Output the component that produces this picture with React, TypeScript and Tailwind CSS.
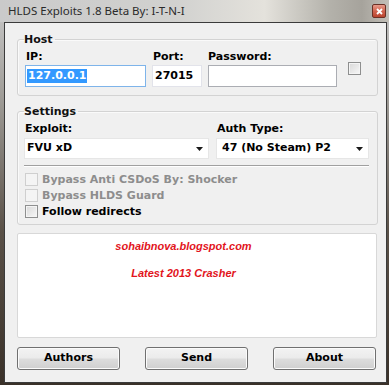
import React from 'react';

const ui = { fontFamily: '"DejaVu Sans", Verdana, sans-serif' };

const Arrow: React.FC = () => (
  <svg width="7" height="4" viewBox="0 0 7 4" className="shrink-0">
    <path d="M0 0h7L3.5 4z" fill="#1a1a1a" />
  </svg>
);

const Check: React.FC<{ disabled?: boolean }> = ({ disabled }) => (
  <span
    className={`inline-block w-[13px] h-[13px] shrink-0 border ${
      disabled
        ? 'border-[#cfcfcf] bg-[#f4f4f4]'
        : 'border-[#8e8f8f] bg-[linear-gradient(135deg,#d8d8d8,#f7f7f7)] shadow-[inset_0_0_0_1px_#f4f4f4]'
    }`}
  />
);

const Btn: React.FC<{ label: string }> = ({ label }) => (
  <button className="w-[103px] h-[23px] rounded-[3px] border border-[#707070] bg-[linear-gradient(180deg,#f3f3f3_0%,#ebebeb_48%,#dddddd_52%,#cfcfcf_100%)] shadow-[inset_0_0_0_1px_#fbfbfb] text-[11px] font-bold text-black">
    {label}
  </button>
);

export default function App() {
  return (
    <div
      className="w-[389px] h-[385px] flex flex-col overflow-hidden bg-[linear-gradient(180deg,#c9c9c9_0%,#a09d98_25%,#5a5148_60%,#3a3129_100%)]"
      style={ui}
    >
      {/* title bar */}
      <div className="h-[22px] shrink-0 flex items-center justify-between pl-[8px] pr-[3px] bg-[linear-gradient(90deg,#cacaca_0%,#d1d1cf_45%,#e4e2dc_68%,#b3b1aa_85%,#a6a39c_93%,#c2bfb8_100%)]">
        <span className="text-[11.5px] text-[#2a2a2a] leading-none" style={{ fontFamily: '"Noto Sans", "Liberation Sans", sans-serif' }}>
          HLDS Exploits 1.8 Beta By: I-T-N-I
        </span>
        <div className="w-[14px] h-[14px] rounded-[2px] border border-[#6b3025] bg-[linear-gradient(180deg,#e69a8a_0%,#d2644f_50%,#b9442f_100%)] flex items-center justify-center">
          <svg width="7" height="7" viewBox="0 0 7 7">
            <path d="M1 1l5 5M6 1L1 6" stroke="#fff" strokeWidth="1.8" />
          </svg>
        </div>
      </div>

      {/* client */}
      <div className="flex-1 ml-[4px] mr-[2px] mb-[2px] border border-[#3b3b3b] bg-[#f0f0f0] pl-[12px] pt-[10px] flex flex-col">
        {/* Host */}
        <fieldset className="w-[361px] border border-[#d3d3d3] rounded-[3px] px-[7px] pb-[8px] shadow-[inset_1px_1px_0_#fafafa]">
          <legend className="text-[11px] font-bold leading-[13px] text-[#111] -ml-[1px] pr-[2px]">Host</legend>
          <div className="flex items-end mt-[4px]">
            <div className="flex flex-col w-[121px]">
              <span className="text-[11px] font-bold leading-[13px] pl-[1px] mb-[2px]">IP:</span>
              <div className="h-[22px] border border-[#7eb4ea] bg-white flex items-center pl-[1px]">
                <span className="text-[11px] font-bold leading-[14px] bg-[#3399ff] text-white px-[1px]">127.0.0.1</span>
              </div>
            </div>
            <div className="flex flex-col w-[50px] ml-[6px]">
              <span className="text-[11px] font-bold leading-[13px] pl-[1px] mb-[2px]">Port:</span>
              <div className="h-[22px] border border-[#e2e3ea] bg-white flex items-center pl-[2px]">
                <span className="text-[11px] font-bold">27015</span>
              </div>
            </div>
            <div className="flex flex-col w-[129px] ml-[6px]">
              <span className="text-[11px] font-bold leading-[13px] mb-[2px]">Password:</span>
              <div className="h-[22px] border border-[#abadb3] bg-white" />
            </div>
            <div className="ml-[11px] mb-[5px]">
              <Check />
            </div>
          </div>
        </fieldset>

        {/* Settings */}
        <fieldset className="w-[361px] mt-[9px] border border-[#d3d3d3] rounded-[3px] px-[6px] pb-[5px] shadow-[inset_1px_1px_0_#fafafa]">
          <legend className="text-[11px] font-bold leading-[13px] text-[#111] ml-0 pr-[2px]">Settings</legend>
          <div className="flex mt-[4px]">
            <div className="flex flex-col w-[185px]">
              <span className="text-[11px] font-bold leading-[13px] pl-[1px] mb-[3px]">Exploit:</span>
              <div className="h-[21px] bg-white border border-[#e6e6e6] flex items-center justify-between pl-[2px] pr-[5px]">
                <span className="text-[11px] font-bold">FVU xD</span>
                <Arrow />
              </div>
            </div>
            <div className="flex flex-col w-[153px] ml-[7px]">
              <span className="text-[11px] font-bold leading-[13px] pl-[1px] mb-[3px]">Auth Type:</span>
              <div className="h-[21px] bg-white border border-[#e6e6e6] flex items-center justify-between pl-[5px] pr-[5px]">
                <span className="text-[11px] font-bold">47 (No Steam) P2</span>
                <Arrow />
              </div>
            </div>
          </div>
          <div className="mt-[6px] h-[2px] w-[345px] border-t border-[#a0a0a0] border-b border-b-white" />
          <div className="mt-[4px] flex flex-col pl-[1px]">
            {[
              { t: 'Bypass Anti CSDoS By: Shocker', d: true },
              { t: 'Bypass HLDS Guard', d: true },
              { t: 'Follow redirects', d: false },
            ].map((r) => (
              <label key={r.t} className="h-[16px] flex items-center gap-[4px]">
                <Check disabled={r.d} />
                <span className={`text-[11px] font-bold leading-none ${r.d ? 'text-[#8d8d8d]' : 'text-black'}`}>{r.t}</span>
              </label>
            ))}
          </div>
        </fieldset>

        {/* output box */}
        <div className="w-[360px] h-[105px] mt-[8px] bg-white border border-[#d8d8d8] rounded-[2px] pr-[27px] pt-[5px] text-center text-[11px] font-bold italic text-[#e2141c]" style={{ fontFamily: '"Liberation Sans", Arial, sans-serif' }}>
          <div className="leading-[14px]">sohaibnova.blogspot.com</div>
          <div className="leading-[14px] mt-[13px]">Latest 2013 Crasher</div>
        </div>

        {/* buttons */}
        <div className="w-[359px] mt-[9px] flex justify-between">
          <Btn label="Authors" />
          <Btn label="Send" />
          <Btn label="About" />
        </div>
      </div>
    </div>
  );
}
